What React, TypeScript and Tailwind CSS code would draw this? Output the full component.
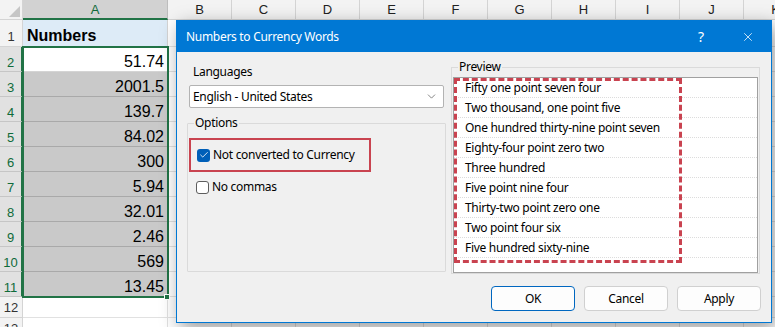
import { ChevronDown, Check, X } from "lucide-react";

const cols = ["B", "C", "D", "E", "F", "G", "H", "I", "J", "K"];

const numbers = ["51.74", "2001.5", "139.7", "84.02", "300", "5.94", "32.01", "2.46", "569", "13.45"];

const preview = [
  "Fifty one point seven four",
  "Two thousand, one point five",
  "One hundred thirty-nine point seven",
  "Eighty-four point zero two",
  "Three hundred",
  "Five point nine four",
  "Thirty-two point zero one",
  "Two point four six",
  "Five hundred sixty-nine",
  "",
];

const ui = "font-['Noto_Sans',sans-serif]";
const xl = "font-['Liberation_Sans',Arial,sans-serif]";

function EmptyCells() {
  return (
    <>
      {cols.map((c) => (
        <div key={c} className="w-[64px] shrink-0 border-r border-b border-[#e1e1e1] bg-white" />
      ))}
    </>
  );
}

function Sheet() {
  return (
    <div className={`flex flex-col ${xl}`}>
      {/* column headers */}
      <div className="flex h-[20px]">
        <div className="w-[23px] shrink-0 bg-[#f3f3f3] border-r border-b border-[#d4d4d4] relative">
          <div className="absolute right-[2px] bottom-[2px] w-0 h-0 border-l-[11px] border-l-transparent border-b-[11px] border-b-[#c6c6c6]" />
        </div>
        <div className="w-[145px] shrink-0 bg-[#d2d2d2] border-r border-[#bdbdbd] border-b-2 border-b-[#217346] flex items-center justify-center text-[13px] leading-none text-[#0f6b3a]">
          A
        </div>
        {cols.map((c) => (
          <div
            key={c}
            className="w-[64px] shrink-0 bg-[#f3f3f3] border-r border-b border-[#d4d4d4] flex items-center justify-center text-[13px] leading-none text-[#222]"
          >
            {c}
          </div>
        ))}
      </div>

      {/* row 1 */}
      <div className="flex h-[27px]">
        <div className="w-[23px] shrink-0 bg-[#f3f3f3] border-r border-b border-[#d4d4d4] flex items-end justify-center pb-[3px] text-[13px] leading-none text-[#333]">
          1
        </div>
        <div className="w-[145px] shrink-0 bg-[#ddebf7] border-r border-b border-[#d4d4d4] flex items-end pl-[4px] pb-[1px] text-[16px] leading-[18px] font-bold text-black">
          Numbers
        </div>
        <EmptyCells />
      </div>

      {/* rows 2-11 */}
      {numbers.map((n, i) => (
        <div key={n} className="flex h-[25px]">
          <div className="w-[23px] shrink-0 bg-[#e1e1e1] border-r-2 border-r-[#217346] border-b border-[#c6c6c6] flex items-end justify-center pb-[2px] text-[13px] leading-none text-[#0f6b3a]">
            {i + 2}
          </div>
          <div
            className={`w-[145px] shrink-0 border-r border-b flex items-end justify-end pr-[3px] pb-0 text-[16px] leading-[18px] text-black ${
              i === 0 ? "bg-white border-[#d4d4d4]" : "bg-[#c9c9c9] border-[#a9a9a9]"
            }`}
          >
            {n}
          </div>
          <EmptyCells />
        </div>
      ))}

      {/* rows 12-13 */}
      {[12, 13].map((r) => (
        <div key={r} className="flex h-[21px]">
          <div className="w-[23px] shrink-0 bg-[#f3f3f3] border-r border-b border-[#d4d4d4] flex items-end justify-center pb-[3px] text-[13px] leading-none text-[#333]">
            {r}
          </div>
          <div className="w-[145px] shrink-0 bg-white border-r border-b border-[#e1e1e1]" />
          <EmptyCells />
        </div>
      ))}
    </div>
  );
}

function Box({ checked }: { checked?: boolean }) {
  return checked ? (
    <span className="w-[13px] h-[13px] rounded-[3px] bg-[#005fb8] flex items-center justify-center shrink-0">
      <Check className="w-[10px] h-[10px] text-white" strokeWidth={2} />
    </span>
  ) : (
    <span className="w-[13px] h-[13px] rounded-[3px] bg-white border border-[#5d5d5d] shrink-0" />
  );
}

function Dialog() {
  return (
    <div
      className={`absolute left-[176px] top-[20px] w-[596px] h-[303px] bg-[#f0f0f0] border border-[#0078d4] flex flex-col tracking-[-0.3px] shadow-[4px_6px_18px_rgba(0,0,0,0.4)] ${ui}`}
    >
      {/* Title bar */}
      <div className="h-[31px] bg-[#0078d4] flex items-center text-white shrink-0">
        <span className="pl-[9px] text-[12px] flex-1">Numbers to Currency Words</span>
        <span className="w-[46px] text-center text-[14px] mr-[1px] ml-[2px]">?</span>
        <span className="w-[46px] flex justify-center">
          <X className="w-[14px] h-[14px]" strokeWidth={1.3} />
        </span>
      </div>

      {/* Body */}
      <div className="flex-1 flex flex-col text-[12px] text-black">
        <div className="flex">
          {/* left column */}
          <div className="w-[270px] pl-[10px] flex flex-col">
            <div className="pl-[6px] pt-[12px] h-[33px] leading-[16px]">Languages</div>
            <div className="w-[255px] h-[23px] ml-[2px] bg-white border border-[#b3b3b3] rounded-[2px] flex items-center pl-[3px] pr-[5px]">
              <span className="flex-1">English - United States</span>
              <ChevronDown className="w-[13px] h-[13px] text-[#6a6a6a]" strokeWidth={1.5} />
            </div>
            {/* Options group */}
            <div className="relative mt-[15px] w-[259px] h-[149px] border border-[#dadada] rounded-[1px]">
              <span className="absolute -top-[9px] left-[6px] px-[1px] bg-[#f0f0f0] leading-[16px]">Options</span>
              <div className="mt-[14px] ml-[1px] w-[182px] h-[34px] border-2 border-[#c94350] flex items-center gap-[3px] pl-[6px]">
                <Box checked />
                <span>Not converted to Currency</span>
              </div>
              <div className="mt-[6px] ml-[8px] flex items-center gap-[3px]">
                <Box />
                <span>No commas</span>
              </div>
            </div>
          </div>

          {/* Preview group */}
          <div className="relative ml-[4px] mt-[15px] w-[309px] h-[207px] border border-[#dadada]">
            <span className="absolute -top-[9px] left-[6px] px-[1px] bg-[#f0f0f0] leading-[16px]">Preview</span>
            <div className="absolute left-[1px] top-[9px] w-[305px] h-[196px] bg-white border border-[#a0a0a0] overflow-hidden">
              {preview.map((p, i) => (
                <div key={i} className="h-[20px] border-b border-dotted border-[#dcdcdc] pl-[11px] leading-[19px]">
                  {p}
                </div>
              ))}
              <div className="absolute left-0 top-0 w-[228px] h-[185px] border-[3px] border-dashed border-[#c94350]" />
            </div>
          </div>
        </div>

        {/* Buttons */}
        <div className="flex justify-end gap-[9px] pr-[10px] mt-[12px]">
          <button className="w-[84px] h-[25px] bg-[#fdfdfd] border border-[#0067c0] rounded-[4px] text-[12px]">OK</button>
          <button className="w-[84px] h-[25px] bg-[#fdfdfd] border border-[#d0d0d0] rounded-[4px] text-[12px]">Cancel</button>
          <button className="w-[84px] h-[25px] bg-[#fdfdfd] border border-[#d0d0d0] rounded-[4px] text-[12px]">Apply</button>
        </div>
      </div>
    </div>
  );
}

export default function App() {
  return (
    <div className="relative w-[775px] h-[327px] overflow-hidden bg-white">
      <Sheet />
      {/* selection A2:A11 */}
      <div className="absolute left-[22px] top-[46px] w-[147px] h-[252px] border-2 border-[#217346] pointer-events-none" />
      <div className="absolute left-[164px] top-[294px] w-[6px] h-[6px] bg-[#217346] border border-white" />
      <Dialog />
    </div>
  );
}
